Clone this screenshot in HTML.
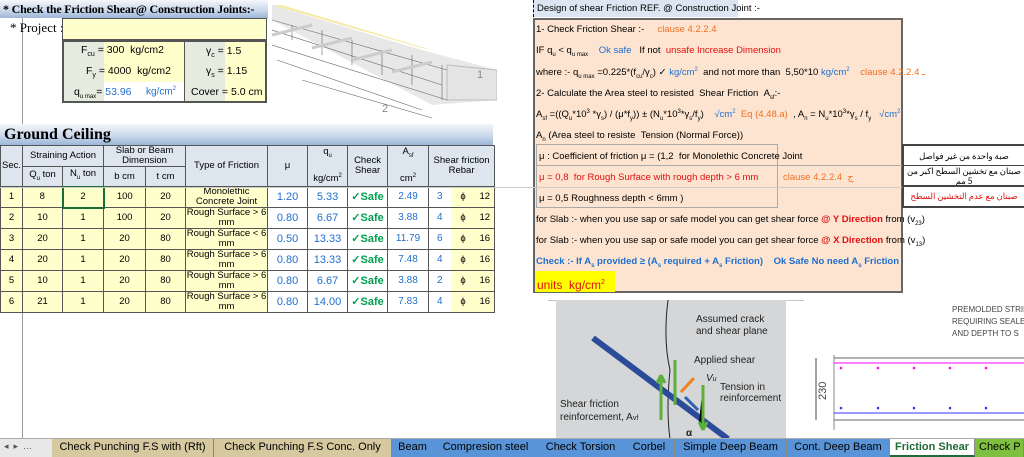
<!DOCTYPE html>
<html><head><meta charset="utf-8"><style>
*{margin:0;padding:0;box-sizing:border-box}
body{width:1024px;height:457px;overflow:hidden;background:#fff;position:relative;font-family:"Liberation Sans",Arial,sans-serif;font-size:10px;color:#000}
.a{position:absolute;white-space:nowrap}
.bar{background:linear-gradient(#f4f7fb,#c7d6ea 60%,#9db6d8);font-family:"Liberation Serif",serif;font-weight:bold;overflow:hidden}
table{border-collapse:collapse;position:absolute;table-layout:fixed}
td{border:1px solid #555;text-align:center;vertical-align:middle;font-size:9.5px;padding:0;overflow:hidden;line-height:10px}
.h td{background:#dde5ef}
.y{background:#ffffcc}
.w{background:#fff;color:#1f6fd0;font-size:11px}
.g{color:#00a050;font-weight:bold}
.pk{background:#fde4d0}
.ln{position:absolute;left:536px;font-size:9.5px;white-space:nowrap}
.o{color:#f07020}.r{color:#e01010}.b{color:#1f6fd0}
.tab{position:absolute;top:439px;height:18px;border-right:1px solid #888;font-size:11px;text-align:center;line-height:17px;white-space:nowrap;overflow:hidden}
.t1{background:#d6c9a0}.t2{background:#5a94d8}
</style></head><body>
<div class="a" style="left:22px;top:0;width:1px;height:438px;background:#999"></div>
<div class="a bar" style="left:0;top:0;width:268px;height:18px;font-size:12px;line-height:18px;padding-left:3px;letter-spacing:-0.2px">* Check the Friction Shear@ Construction Joints:-</div>
<div class="a" style="left:10px;top:20px;font-family:'Liberation Serif',serif;font-size:13px">* Project :</div>
<div class="a" style="left:62px;top:18px;width:205px;height:22px;background:#ffffcc;border:1px solid #555"></div>
<div class="a" style="left:62px;top:40px;width:205px;height:63px;border:2px solid #555;background:#ffffcc"></div>
<div class="a" style="left:64px;top:42px;width:40px;height:59px;background:#e6ebe0"></div>
<div class="a" style="left:104px;top:82px;width:80px;height:19px;background:#fff"></div>
<div class="a" style="left:184px;top:42px;width:1px;height:59px;background:#555"></div>
<div class="a" style="left:185px;top:42px;width:40px;height:59px;background:#e6ebe0"></div>
<div class="a" style="left:81px;top:44px;font-size:10.5px">F<sub style="font-size:7px">cu</sub> = 300 &nbsp;kg/cm2</div>
<div class="a" style="left:86px;top:65px;font-size:10.5px">F<sub style="font-size:7px">y</sub> = 4000 &nbsp;kg/cm2</div>
<div class="a" style="left:74px;top:86px;font-size:10.5px">q<sub style="font-size:6px">u max</sub>= <span class="b">53.96</span></div>
<div class="a b" style="left:146px;top:86px;font-size:10px">kg/cm<sup style="font-size:6px">2</sup></div>
<div class="a" style="left:206px;top:45px;font-size:10.5px">γ<sub style="font-size:7px">c</sub> = 1.5</div>
<div class="a" style="left:206px;top:65px;font-size:10.5px">γ<sub style="font-size:7px">s</sub> = 1.15</div>
<div class="a" style="left:191px;top:86px;font-size:10.5px">Cover = 5.0 cm</div>
<svg class="a" style="left:272px;top:0" width="225" height="122">
<polygon points="0,5 150,50 225,70 225,100 160,105 0,20" fill="#e8e8e8"/>
<polygon points="0,5 150,48 160,50 10,5" fill="#f5eaa8"/>
<polygon points="175,65 225,70 225,100 175,100" fill="#e4e4e4" stroke="#bbb"/>
<g stroke="#666" stroke-width="0.6">
<path d="M0,30 L170,85 M0,45 L175,100 M5,60 L150,110 M30,80 L160,118 M0,20 L175,70"/>
<path d="M20,25 L20,40 M50,30 L50,55 M80,40 L80,65 M110,50 L110,75 M140,55 L140,85 M170,65 L170,100"/>
</g>
<g stroke="#ccc" stroke-width="3"><path d="M0,35 L40,25 M40,48 L80,38 M80,60 L120,50 M120,72 L160,62"/></g>
<text x="205" y="78" font-size="11" fill="#888">1</text><text x="110" y="112" font-size="11" fill="#888">2</text>
</svg>
<div class="a bar" style="left:0;top:124px;width:493px;height:21px;font-size:16px;line-height:22px;padding-left:4px">Ground Ceiling</div>
<table style="left:0;top:145px;width:494px">
<colgroup><col style="width:22px"><col style="width:40px"><col style="width:41px"><col style="width:42px"><col style="width:40px"><col style="width:82px"><col style="width:40px"><col style="width:40px"><col style="width:40px"><col style="width:41px"><col style="width:22px"><col style="width:25px"><col style="width:19px"></colgroup>
<tr class="h" style="height:21px"><td rowspan="2">Sec.</td><td colspan="2">Straining Action</td><td colspan="2">Slab or Beam Dimension</td><td rowspan="2">Type of Friction</td><td rowspan="2">μ</td><td rowspan="2">q<sub style="font-size:6px">u</sub><br><br>kg/cm<sup style="font-size:6px">2</sup></td><td rowspan="2">Check<br>Shear</td><td rowspan="2">A<sub style="font-size:6px">sf</sub><br><br>cm<sup style="font-size:6px">2</sup></td><td rowspan="2" colspan="3">Shear friction<br>Rebar</td></tr>
<tr class="h" style="height:20px"><td>Q<sub style="font-size:6px">u</sub> ton</td><td>N<sub style="font-size:6px">u</sub> ton</td><td>b cm</td><td>t cm</td></tr>
<tr class="y" style="height:21px"><td>1</td><td>8</td><td style="border:2px solid #1d6b36">2</td><td>100</td><td>20</td><td>Monolethic Concrete Joint</td><td class="w">1.20</td><td class="w">5.33</td><td class="w g">✓Safe</td><td class="w" style="font-size:10px">2.49</td><td class="w" style="font-size:10px;border-right:0">3</td><td style="border-left:0;border-right:0">ϕ</td><td style="border-left:0">12</td></tr>
<tr class="y" style="height:21px"><td>2</td><td>10</td><td>1</td><td>100</td><td>20</td><td>Rough Surface &gt; 6 mm</td><td class="w">0.80</td><td class="w">6.67</td><td class="w g">✓Safe</td><td class="w" style="font-size:10px">3.88</td><td class="w" style="font-size:10px;border-right:0">4</td><td style="border-left:0;border-right:0">ϕ</td><td style="border-left:0">12</td></tr>
<tr class="y" style="height:21px"><td>3</td><td>20</td><td>1</td><td>20</td><td>80</td><td>Rough Surface &lt; 6 mm</td><td class="w">0.50</td><td class="w">13.33</td><td class="w g">✓Safe</td><td class="w" style="font-size:10px">11.79</td><td class="w" style="font-size:10px;border-right:0">6</td><td style="border-left:0;border-right:0">ϕ</td><td style="border-left:0">16</td></tr>
<tr class="y" style="height:21px"><td>4</td><td>20</td><td>1</td><td>20</td><td>80</td><td>Rough Surface &gt; 6 mm</td><td class="w">0.80</td><td class="w">13.33</td><td class="w g">✓Safe</td><td class="w" style="font-size:10px">7.48</td><td class="w" style="font-size:10px;border-right:0">4</td><td style="border-left:0;border-right:0">ϕ</td><td style="border-left:0">16</td></tr>
<tr class="y" style="height:21px"><td>5</td><td>10</td><td>1</td><td>20</td><td>80</td><td>Rough Surface &gt; 6 mm</td><td class="w">0.80</td><td class="w">6.67</td><td class="w g">✓Safe</td><td class="w" style="font-size:10px">3.88</td><td class="w" style="font-size:10px;border-right:0">2</td><td style="border-left:0;border-right:0">ϕ</td><td style="border-left:0">16</td></tr>
<tr class="y" style="height:21px"><td>6</td><td>21</td><td>1</td><td>20</td><td>80</td><td>Rough Surface &gt; 6 mm</td><td class="w">0.80</td><td class="w">14.00</td><td class="w g">✓Safe</td><td class="w" style="font-size:10px">7.83</td><td class="w" style="font-size:10px;border-right:0">4</td><td style="border-left:0;border-right:0">ϕ</td><td style="border-left:0">16</td></tr>
</table>
<div class="a" style="left:533px;top:0;width:205px;height:17px;background:#dce6f2;font-size:9.5px;line-height:17px;padding-left:3px;border-left:1px dashed #000">Design of shear Friction REF. @ Construction Joint :-</div>
<div class="a pk" style="left:533px;top:18px;width:370px;height:275px;border:2px solid #666"></div>
<div class="a" style="left:536px;top:144px;width:242px;height:64px;border:1px solid #aaa"></div>
<div class="a" style="left:536px;top:165px;width:488px;height:1px;background:#aaa"></div>
<div class="a" style="left:0;top:187px;width:1024px;height:1px;background:#ccc"></div>
<div class="ln" style="top:24px">1- Check Friction Shear :- &nbsp;&nbsp;&nbsp; <span class="o">clause 4.2.2.4</span></div>
<div class="ln" style="top:45px">IF q<sub style="font-size:6px">u</sub> &lt; q<sub style="font-size:6px">u max</sub> &nbsp;&nbsp; <span class="b">Ok safe</span> &nbsp; If not &nbsp;<span class="r">unsafe Increase Dimension</span></div>
<div class="ln" style="top:67px">where :- q<sub style="font-size:6px">u max</sub> =0.225*(f<sub style="font-size:6px">cu</sub>/γ<sub style="font-size:6px">c</sub>) ✓ <span class="b">kg/cm<sup style="font-size:6px">2</sup></span> &nbsp;and not more than &nbsp;5,50*10 <span class="b">kg/cm<sup style="font-size:6px">2</sup></span> &nbsp;&nbsp; <span class="o">clause 4.2.2.4 ـ</span></div>
<div class="ln" style="top:88px">2- Calculate the Area steel to resisted &nbsp;Shear Friction &nbsp;A<sub style="font-size:6px">sf</sub>:-</div>
<div class="ln" style="top:109px">A<sub style="font-size:6px">sf</sub> =((Q<sub style="font-size:6px">u</sub>*10<sup style="font-size:6px">3</sup> *γ<sub style="font-size:6px">s</sub>) / (μ*f<sub style="font-size:6px">y</sub>)) ± (N<sub style="font-size:6px">u</sub>*10<sup style="font-size:6px">3</sup>*γ<sub style="font-size:6px">s</sub>/f<sub style="font-size:6px">y</sub>) &nbsp;&nbsp; <span class="b">√cm<sup style="font-size:6px">2</sup></span> &nbsp;<span class="o">Eq (4.48.a)</span> &nbsp;, A<sub style="font-size:6px">n</sub> = N<sub style="font-size:6px">u</sub>*10<sup style="font-size:6px">3</sup>*γ<sub style="font-size:6px">s</sub> / f<sub style="font-size:6px">y</sub> &nbsp; <span class="b">√cm<sup style="font-size:6px">2</sup></span></div>
<div class="ln" style="top:130px">A<sub style="font-size:6px">n</sub> (Area steel to resiste &nbsp;Tension (Normal Force))</div>
<div class="ln" style="top:151px;left:539px">μ : Coefficient of friction μ = (1,2 &nbsp;for Monolethic Concrete Joint</div>
<div class="ln r" style="top:172px;left:539px">μ = 0,8 &nbsp;for Rough Surface with rough depth &gt; 6 mm</div>
<div class="ln o" style="top:172px;left:783px">clause 4.2.2.4 &nbsp;ج</div>
<div class="ln" style="top:193px;left:539px">μ = 0,5 Roughness depth &lt; 6mm )</div>
<div class="ln" style="top:214px">for Slab :- when you use sap or safe model you can get shear force <b class="r">@ Y Direction</b> from (v<sub style="font-size:6px">23</sub>)</div>
<div class="ln" style="top:235px">for Slab :- when you use sap or safe model you can get shear force <b class="r">@ X Direction</b> from (v<sub style="font-size:6px">13</sub>)</div>
<div class="ln b" style="top:256px;font-weight:bold">Check :- If A<sub style="font-size:6px">s</sub> provided ≥ (A<sub style="font-size:6px">s</sub> required + A<sub style="font-size:6px">s</sub> Friction) &nbsp;&nbsp; Ok Safe No need A<sub style="font-size:6px">s</sub> Friction</div>
<div class="a r" style="left:535px;top:271px;width:80px;height:21px;background:#ffff00;font-size:12px;line-height:24px;padding-left:2px">units &nbsp;kg/cm<sup style="font-size:7px">2</sup></div>
<div class="a" style="left:902px;top:144px;width:122px;height:64px;border:2px solid #444;border-right:0;background:#fff;font-family:'Noto Sans CJK SC',sans-serif;font-size:8.5px;direction:rtl;text-align:center;white-space:normal">
<div style="height:20px;line-height:20px;border-bottom:1px solid #444">صبة واحدة من غير فواصل</div>
<div style="height:21px;line-height:10px;border-bottom:2px solid #444;overflow:hidden">صبتان مع تخشين السطح اكبر من 5 مم</div>
<div style="height:19px;line-height:19px;color:#e01010">صبتان مع عدم التخشين السطح</div></div>
<svg class="a" style="left:548px;top:300px" width="256" height="139">
<rect x="8" y="0" width="230" height="139" fill="#d4d6d8"/>
<path d="M0,0 L8,0 M238,0 L256,0" stroke="#888"/>
<path d="M120,0 Q115,40 122,70 Q118,110 122,139" stroke="#222" fill="none"/>
<line x1="45" y1="38" x2="180" y2="139" stroke="#2a4a9a" stroke-width="6"/>
<path d="M113,75 L113,120 M113,75 l-4,8 M113,75 l4,8" stroke="#5db03a" stroke-width="3"/>
<path d="M127,60 L127,105" stroke="#5db03a" stroke-width="3"/>
<path d="M155,85 L155,130 l-4,-8 M155,130 l4,-8" stroke="#5db03a" stroke-width="3"/>
<path d="M146,78 L133,92" stroke="#f08020" stroke-width="3"/>
<path d="M137,97 L150,110" stroke="#2a60b0" stroke-width="3"/>
<g font-size="10" fill="#222"><text x="148" y="22">Assumed crack</text><text x="148" y="34">and shear plane</text><text x="146" y="63">Applied shear</text><text x="158" y="81" font-style="italic">V<tspan font-size="7">u</tspan></text><text x="172" y="90">Tension in</text><text x="172" y="101">reinforcement</text><text x="12" y="107">Shear friction</text><text x="12" y="120">reinforcement, A<tspan font-size="7">vf</tspan></text><text x="138" y="136" font-weight="bold">α</text></g>
</svg>
<svg class="a" style="left:806px;top:300px" width="218" height="139">
<g font-size="8" fill="#444"><text x="146" y="12">PREMOLDED STRIP</text><text x="146" y="24">REQUIRING SEALEN</text><text x="146" y="36">AND DEPTH TO S</text></g>
<line x1="28" y1="55" x2="28" y2="130" stroke="#888"/>
<line x1="28" y1="58" x2="218" y2="58" stroke="#666"/><line x1="28" y1="120" x2="218" y2="120" stroke="#666"/>
<line x1="28" y1="63" x2="218" y2="63" stroke="#f0f"/><line x1="28" y1="113" x2="218" y2="113" stroke="#33f"/>
<g fill="#f0f"><circle cx="35" cy="68" r="1.3"/><circle cx="72" cy="68" r="1.3"/><circle cx="108" cy="68" r="1.3"/><circle cx="144" cy="68" r="1.3"/><circle cx="180" cy="68" r="1.3"/></g>
<g fill="#33f"><circle cx="35" cy="108" r="1.3"/><circle cx="72" cy="108" r="1.3"/><circle cx="108" cy="108" r="1.3"/><circle cx="144" cy="108" r="1.3"/><circle cx="180" cy="108" r="1.3"/></g>
<line x1="10" y1="58" x2="10" y2="120" stroke="#444"/>
<text x="20" y="100" font-size="11" fill="#444" transform="rotate(-90 20 100)">230</text>
</svg>
<div class="a" style="left:0;top:438px;width:1024px;height:19px;background:#e8e8e8;border-top:1px solid #aaa"></div>
<div class="a" style="left:4px;top:441px;font-size:9px;color:#555">◂ &nbsp;▸ &nbsp;…</div>
<div class="tab t1" style="left:52px;width:162px">Check Punching F.S with (Rft)</div>
<div class="tab t1" style="left:214px;width:178px">Check Punching F.S Conc. Only</div>
<div class="tab t2" style="left:392px;width:42px">Beam</div>
<div class="tab t2" style="left:434px;width:104px">Compresion steel</div>
<div class="tab t2" style="left:538px;width:86px">Check Torsion</div>
<div class="tab t2" style="left:624px;width:51px">Corbel</div>
<div class="tab t2" style="left:675px;width:112px">Simple Deep Beam</div>
<div class="tab t2" style="left:787px;width:103px">Cont. Deep Beam</div>
<div class="tab" style="left:890px;width:85px;background:#fff;color:#1d6b36;font-weight:bold;border-bottom:2px solid #1d6b36">Friction Shear</div>
<div class="tab" style="left:975px;width:49px;background:#80c040;text-align:left;padding-left:4px">Check P</div>
</body></html>
